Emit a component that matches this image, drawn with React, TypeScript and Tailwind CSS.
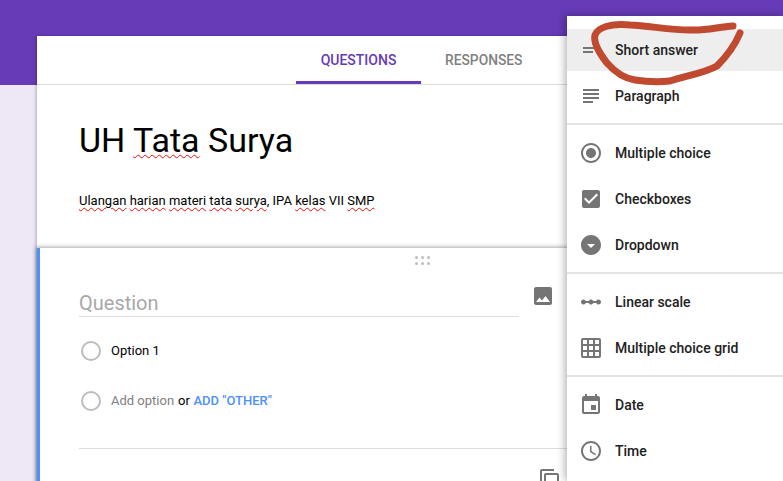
import React from "react";

const ICONS: Record<string, React.ReactNode> = {
  shortText: <path d="M4 9h16v2H4zm0 4h10v2H4z" />,
  paragraph: <path d="M14 17H4v2h10v-2zm6-8H4v2h16V9zM4 15h16v-2H4v2zM4 5v2h16V5H4z" />,
  radio: (
    <path d="M12 7c-2.76 0-5 2.24-5 5s2.24 5 5 5 5-2.24 5-5-2.24-5-5-5zm0-5C6.48 2 2 6.48 2 12s4.48 10 10 10 10-4.48 10-10S17.52 2 12 2zm0 18c-4.42 0-8-3.58-8-8s3.58-8 8-8 8 3.58 8 8-3.58 8-8 8z" />
  ),
  checkbox: (
    <path d="M19 3H5c-1.11 0-2 .9-2 2v14c0 1.1.89 2 2 2h14c1.11 0 2-.9 2-2V5c0-1.1-.89-2-2-2zm-9 14l-5-5 1.41-1.41L10 14.17l7.59-7.59L19 8l-9 9z" />
  ),
  dropdown: (
    <path d="M12 2C6.48 2 2 6.48 2 12s4.48 10 10 10 10-4.48 10-10S17.52 2 12 2zm0 13l-4-4h8l-4 4z" />
  ),
  linear: (
    <path d="M19.5 9.5c-1.03 0-1.9.62-2.29 1.5h-2.92c-.39-.88-1.26-1.5-2.29-1.5s-1.9.62-2.29 1.5H6.79c-.39-.88-1.26-1.5-2.29-1.5C3.12 9.5 2 10.62 2 12s1.12 2.5 2.5 2.5c1.03 0 1.9-.62 2.29-1.5h2.92c.39.88 1.26 1.5 2.29 1.5s1.9-.62 2.29-1.5h2.92c.39.88 1.26 1.5 2.29 1.5 1.38 0 2.5-1.12 2.5-2.5s-1.12-2.5-2.5-2.5z" />
  ),
  grid: (
    <path d="M20 2H4c-1.1 0-2 .9-2 2v16c0 1.1.9 2 2 2h16c1.1 0 2-.9 2-2V4c0-1.1-.9-2-2-2zM8 20H4v-4h4v4zm0-6H4v-4h4v4zm0-6H4V4h4v4zm6 12h-4v-4h4v4zm0-6h-4v-4h4v4zm0-6h-4V4h4v4zm6 12h-4v-4h4v4zm0-6h-4v-4h4v4zm0-6h-4V4h4v4z" />
  ),
  date: (
    <path d="M17 12h-5v5h5v-5zM16 1v2H8V1H6v2H5c-1.11 0-1.99.9-1.99 2L3 19c0 1.1.89 2 2 2h14c1.1 0 2-.9 2-2V5c0-1.1-.9-2-2-2h-1V1h-2zm3 18H5V8h14v11z" />
  ),
  time: (
    <path d="M11.99 2C6.47 2 2 6.48 2 12s4.47 10 9.99 10C17.52 22 22 17.52 22 12S17.52 2 11.99 2zM12 20c-4.42 0-8-3.58-8-8s3.58-8 8-8 8 3.58 8 8-3.58 8-8 8zm.5-13H11v6l5.25 3.15.75-1.23-4.5-2.67z" />
  ),
  image: (
    <path d="M21 19V5c0-1.1-.9-2-2-2H5c-1.1 0-2 .9-2 2v14c0 1.1.9 2 2 2h14c1.1 0 2-.9 2-2zM8.5 13.5l2.5 3.01L14.5 12l4.5 6H5l3.5-4.5z" />
  ),
  copy: (
    <path d="M16 1H4c-1.1 0-2 .9-2 2v14h2V3h12V1zm3 4H8c-1.1 0-2 .9-2 2v14c0 1.1.9 2 2 2h11c1.1 0 2-.9 2-2V7c0-1.1-.9-2-2-2zm0 16H8V7h11v14z" />
  ),
};

function Icon({ name, className = "" }: { name: string; className?: string }) {
  return (
    <svg viewBox="0 0 24 24" width="24" height="24" fill="#757575" className={`shrink-0 ${className}`}>
      {ICONS[name]}
    </svg>
  );
}

const MENU = [
  [
    { icon: "shortText", label: "Short answer", active: true },
    { icon: "paragraph", label: "Paragraph" },
  ],
  [
    { icon: "radio", label: "Multiple choice" },
    { icon: "checkbox", label: "Checkboxes" },
    { icon: "dropdown", label: "Dropdown" },
  ],
  [
    { icon: "linear", label: "Linear scale" },
    { icon: "grid", label: "Multiple choice grid" },
  ],
  [
    { icon: "date", label: "Date" },
    { icon: "time", label: "Time" },
  ],
];

function Squiggle({ children }: { children: React.ReactNode }) {
  return (
    <span className="underline decoration-wavy decoration-[#e81010] decoration-1 underline-offset-2">{children}</span>
  );
}

function TypeMenu() {
  return (
    <div className="absolute left-[567px] top-[16px] w-[216px] h-[465px] bg-white pt-[13px] shadow-[-2px_0_8px_rgba(0,0,0,0.3)]">
      {MENU.map((group, i) => (
        <div key={i} className={i > 0 ? "border-t-2 border-[#e4e4e4] mt-[6px] pt-[7px]" : ""}>
          <div className="flex flex-col gap-1">
            {group.map((item) => (
              <div
                key={item.label}
                className={`flex h-[42px] items-center pl-[12px] text-[14px] font-medium text-[#212121] ${
                  item.active ? "bg-[#eeeeee]" : ""
                }`}
              >
                <Icon name={item.icon} />
                <span className="ml-[12px]">{item.label}</span>
              </div>
            ))}
          </div>
        </div>
      ))}
    </div>
  );
}

export default function App() {
  return (
    <div className="relative w-[783px] h-[481px] overflow-hidden bg-[#ede7f6] font-['Roboto',sans-serif]">
      <div className="h-[85px] bg-[#673ab7]" />

      <div className="ml-[37px] mt-[-49px] bg-white shadow-[0_1px_4px_rgba(0,0,0,0.4)]">
        {/* tabs */}
        <div className="flex h-[49px] border-b border-[#dcdcdc] pl-[259px] text-[14px] font-medium">
          <div className="flex w-[125px] h-[48px] items-center justify-center border-b-[3px] border-[#673ab7] pt-[3px] text-[#673ab7]">
            QUESTIONS
          </div>
          <div className="ml-[24px] flex h-[48px] items-center text-[13.8px] text-[#7f7f7f]">RESPONSES</div>
        </div>

        {/* title */}
        <div className="h-[163px] pl-[42px] pt-[34px] text-black">
          <div className="text-[34px] leading-[42px]">
            UH <Squiggle>Tata</Squiggle> Surya
          </div>
          <div className="mt-[30px] text-[13px] leading-[20px]">
            <Squiggle>Ulangan</Squiggle> <Squiggle>harian</Squiggle> <Squiggle>materi</Squiggle>{" "}
            <Squiggle>tata</Squiggle> <Squiggle>surya</Squiggle>, IPA <Squiggle>kelas</Squiggle> VII{" "}
            <Squiggle>SMP</Squiggle>
          </div>
        </div>

        {/* question card */}
        <div className="h-[240px] border-l-[3px] border-[#4d90fe] pl-[39px] pt-[8px] shadow-[-1px_-1px_4px_rgba(0,0,0,0.35)]">
          <div className="ml-[336px] grid w-[15px] grid-cols-3 gap-[3px]">
            {[0, 1, 2, 3, 4, 5].map((d) => (
              <span key={d} className="size-[3px] rounded-full bg-[#bdbdbd]" />
            ))}
          </div>

          <div className="mt-[21px] flex w-[476px] items-start justify-between">
            <div className="h-[31px] w-[440px] border-b border-[#dedede] pt-[3px] text-[20px] leading-[28px] text-[#a8a8a8]">
              Question
            </div>
            <Icon name="image" className="mt-[-2px]" />
          </div>

          <div className="mt-[24px] flex h-[20px] items-center text-[13px] text-black">
            <span className="ml-[2px] size-[20px] rounded-full border-2 border-[#bdbdbd]" />
            <span className="ml-[10px]">Option 1</span>
          </div>

          <div className="mt-[30px] flex h-[20px] items-center text-[13px]">
            <span className="ml-[2px] size-[20px] rounded-full border-2 border-[#bdbdbd]" />
            <span className="ml-[10px] text-[#808080]">Add option</span>
            <span className="ml-[4px] text-black">or</span>
            <span className="ml-[3.5px] font-medium text-[#4d90fe]">ADD "OTHER"</span>
          </div>

          <div className="mt-[37px] w-[488px] border-t border-[#dedede] pt-[19px]">
            <div className="flex justify-end pr-[5px]">
              <Icon name="copy" />
            </div>
          </div>
        </div>
      </div>

      <TypeMenu />

      {/* red marker scribble */}
      <svg className="absolute left-0 top-0 pointer-events-none" width="783" height="481" fill="none">
        <path
          d="M733 26 C718 27 705 31 690 30 C670 30 650 26 630 25 C612 23 598 27 595 35 C593 43 600 54 607 63 C614 71 622 78 635 80 C648 82 660 82 670 81 C685 76 705 73 717 66 C725 58 735 45 740 33"
          stroke="#c04a30"
          strokeWidth="7"
          strokeLinecap="round"
          strokeLinejoin="round"
        />
      </svg>
    </div>
  );
}
